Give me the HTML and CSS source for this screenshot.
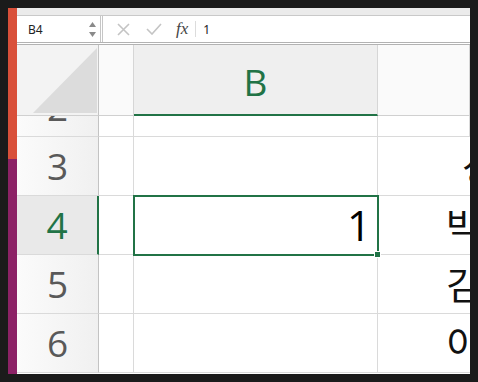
FILE: index.html
```html
<!DOCTYPE html>
<html lang="ko">
<head>
    <meta charset="UTF-8">
    <meta name="viewport" content="width=device-width, initial-scale=1.0">
    <title>Sheet</title>
    <link rel="stylesheet" href="styles.css">
</head>
<body>

<div class="window">
    <div class="accent"></div>

    <div class="workbook">
        <div class="ribbon-edge"></div>

        <div class="formula-bar">
            <div class="name-box">
                <span>B4</span>
                <svg class="spinner" width="7" height="15" viewBox="0 0 7 15">
                    <polygon points="3.5,0 7,5 0,5" fill="#8a8a8a"/>
                    <polygon points="0,10 7,10 3.5,15" fill="#8a8a8a"/>
                </svg>
            </div>
            <div class="formula-tools">
                <svg class="tool-cancel" width="13" height="13" viewBox="0 0 13 13">
                    <path d="M1 1 L12 12 M12 1 L1 12" stroke="#c4c4c4" stroke-width="1.6" fill="none"/>
                </svg>
                <svg class="tool-enter" width="16" height="12" viewBox="0 0 16 12">
                    <path d="M1 6 L6 11 L15 1" stroke="#c4c4c4" stroke-width="1.6" fill="none"/>
                </svg>
                <span class="tool-fx">fx</span>
            </div>
            <div class="formula-input">1</div>
        </div>

        <div class="sheet">
            <!-- column headers -->
            <div class="cell corner">
                <svg width="64" height="65" viewBox="0 0 64 65">
                    <polygon points="0,65 64,0 64,65" fill="#dcdcdc"/>
                </svg>
            </div>
            <div class="cell col-head"></div>
            <div class="cell col-head selected">B</div>
            <div class="cell col-head"></div>

            <!-- row 2 (scrolled, mostly hidden) -->
            <div class="cell row-head partial"><span>2</span></div>
            <div class="cell"></div>
            <div class="cell"></div>
            <div class="cell"></div>

            <div class="cell row-head">3</div>
            <div class="cell"></div>
            <div class="cell"></div>
            <div class="cell name title">성명</div>

            <div class="cell row-head selected">4</div>
            <div class="cell"></div>
            <div class="cell value active">1</div>
            <div class="cell name">박지성</div>

            <div class="cell row-head">5</div>
            <div class="cell"></div>
            <div class="cell"></div>
            <div class="cell name">김연아</div>

            <div class="cell row-head">6</div>
            <div class="cell"></div>
            <div class="cell"></div>
            <div class="cell name">이순신</div>
        </div>
    </div>
</div>

</body>
</html>
```

FILE: styles.css
```css
body {
    margin: 0;
    padding: 0;
    background-color: #1b1b1b;
    font-family: 'Open Sans', 'Noto Sans', sans-serif;
}

.window {
    margin: 8px;
    width: 462px;
    height: 366px;
    display: flex;
    overflow: hidden;
}

.accent {
    width: 9px;
    flex-shrink: 0;
    background: linear-gradient(to bottom, #d9503a 0, #d9503a 151px, #8c2266 151px, #8c2266 100%);
}

.workbook {
    flex: 1;
    display: flex;
    flex-direction: column;
    background-color: #fff;
    overflow: hidden;
}

.ribbon-edge {
    height: 7px;
    background-color: #ebebeb;
    border-bottom: 1px solid #c9c9c9;
}

.formula-bar {
    height: 26px;
    display: flex;
    align-items: center;
    border-bottom: 3px double #b2b2b2;
    font-family: 'Noto Sans', 'Open Sans', sans-serif;
    font-size: 12px;
    color: #222;
}

.name-box {
    box-sizing: border-box;
    width: 86px;
    height: 100%;
    display: flex;
    align-items: center;
    justify-content: space-between;
    padding: 0 4px 0 11px;
    border-right: 3px double #c6c6c6;
}

.spinner {
    margin-top: 1px;
}

.formula-tools {
    display: flex;
    align-items: center;
    height: 16px;
    padding-left: 14px;
    padding-right: 7px;
    border-right: 1px solid #dcdcdc;
}

.tool-enter {
    margin-left: 16px;
}

.tool-fx {
    margin-left: 14px;
    font-family: 'Liberation Serif', serif;
    font-style: italic;
    font-size: 17px;
    color: #444;
}

.formula-input {
    padding-left: 7px;
}

.sheet {
    display: grid;
    grid-template-columns: 82px 35px 244px 1fr;
    grid-template-rows: 71px 21px 59px 59px 59px 59px;
}

.cell {
    box-sizing: border-box;
    border-right: 1px solid #dadada;
    border-bottom: 1px solid #dadada;
    font-size: 37px;
    line-height: 57px;
    white-space: nowrap;
    overflow: hidden;
}

.corner {
    display: flex;
    justify-content: flex-end;
    align-items: flex-end;
    padding: 0 1px 2px 0;
    background-color: #f3f3f3;
    border-right-color: #c3c3c3;
    border-bottom-color: #d0d0d0;
}

.col-head {
    background-color: #fafafa;
    border-bottom-color: #d0d0d0;
    border-right-color: #d6d6d6;
}

.col-head.selected {
    background-color: #efefef;
    border-bottom: 2px solid #217346;
    color: #217346;
    text-align: center;
    line-height: 71px;
    padding-top: 1px;
}

.row-head {
    background: linear-gradient(to right, #fbfbfb, #f0f0f0);
    border-right-color: #c3c3c3;
    color: #595959;
    text-align: center;
}

.row-head.selected {
    background: #e9e9e9;
    border-right: 2px solid #217346;
    color: #217346;
}

.row-head.partial span {
    display: block;
    margin-top: -38px;
}

.value {
    text-align: right;
    padding-right: 6px;
    font-size: 42px;
    color: #000;
}

.active {
    position: relative;
    overflow: visible;
}

.active::after {
    content: "";
    position: absolute;
    left: -1px;
    top: -1px;
    right: -2px;
    bottom: -2px;
    border: 2px solid #217346;
}

.active::before {
    content: "";
    position: absolute;
    right: -4px;
    bottom: -4px;
    width: 5px;
    height: 5px;
    background-color: #217346;
    border: 1px solid #fff;
    z-index: 1;
}

.name {
    padding-left: 68px;
    font-family: 'Noto Sans CJK KR', sans-serif;
    font-size: 38px;
    line-height: 55px;
    color: #111;
    border-right: none;
}

.name.title {
    padding-left: 84px;
}
```
